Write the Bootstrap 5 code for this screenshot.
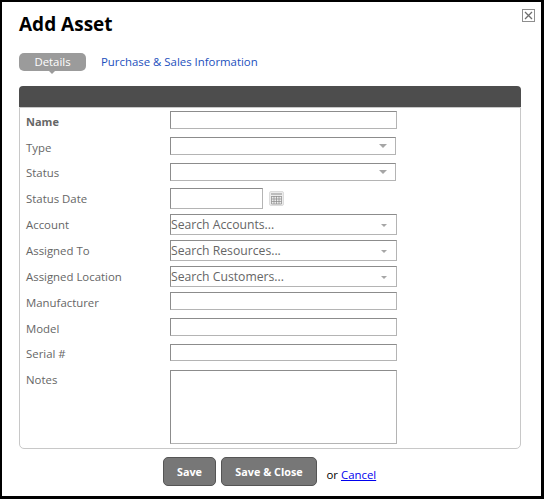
<!DOCTYPE html>
<html lang="en">
<head>
<meta charset="utf-8">
<title>Add Asset</title>
<link rel="stylesheet" href="https://cdn.jsdelivr.net/npm/bootstrap@5.3.0/dist/css/bootstrap.min.css">
<style>
html,body{height:100%;background:#fff}
body{font-family:"Open Sans","Noto Sans",sans-serif;font-size:11.4px;color:#666}
.dlg{width:544px;height:499px;border:solid #000;border-width:2px 3px 3px 2px;display:flex;flex-direction:column;padding:0 20px 0 17px;position:relative}
.dlg-title{font-size:19px;font-weight:700;color:#000;margin:0;line-height:26px;padding-top:9px;height:37px}
.dlg-close{position:absolute;top:7px;right:6px;width:13px;height:13px;display:block;line-height:0}
.tabs-row{margin-top:14px;height:33px;align-items:flex-start}
.tab-on{width:67px;height:18px;background:#9b9b9b;color:#fff;border-radius:5px;line-height:17px;text-align:center;position:relative;display:block;text-decoration:none}
.tab-on::after{content:"";position:absolute;left:30px;top:18px;border:solid transparent;border-width:3px 3px 0;border-top-color:#9b9b9b}
.tab-off{color:#1c4fbd;text-decoration:none;margin-left:15px;line-height:17px}
.pane{height:363px;border-radius:4px 4px 5px 5px;border:0;background:transparent;width:502px}
.pane-head{height:21px;background:#4d4d4d;border-radius:4px 4px 0 0;flex:none}
.pane-body{flex:1;border:1px solid #c8c8c8;border-radius:0 0 5px 5px;padding:3px 0 0 6px}
.f-row{height:26px;display:flex;align-items:flex-start}
.f-row.short{height:25px}
.f-label{width:144px;flex:none;line-height:20px;padding-top:1px;margin:0;color:#666}
.f-label.req{font-weight:700;font-size:11px}
.f-label.up{padding-top:0}
.f-in{display:block;padding:0 1px 1px 0;border:1px solid;border-color:#8c8c8c #b4b4b4 #b4b4b4 #8c8c8c;border-radius:0;font-size:12.2px;line-height:18px;color:#666;background:#fff;box-shadow:none}
.f-in::placeholder{color:#666;opacity:1}
.w-full{width:227px;height:18px}
.w-sel{width:226px;height:18px}
.w-date{width:93px;height:21px}
.w-combo{width:227px;height:21px}
.h-serial{height:17px}
.h-notes{height:74px;resize:none}
.sel-wrap{position:relative;display:block}
.sel-wrap::after{content:"";position:absolute;right:9px;top:7px;border:solid transparent;border-width:4px 4px 0;border-top-color:#a6a6a6}
.combo-wrap::after{top:10px;right:10px;border-width:3px 3px 0}
.cal{margin:3px 0 0 6px;display:block}
.foot{height:38px;padding-top:8px;align-items:flex-start;justify-content:flex-start;padding-left:144px}
.btn-g{height:29px;background:#777;border:1px solid #555;border-radius:5px;color:#fff;font-weight:700;font-size:10.8px;padding:0;line-height:26px}
.btn-g:hover{background:#777;color:#fff;border-color:#555}
.b-save{width:53px}
.b-saveclose{width:96px;margin-left:5px}
.foot-or{color:#000;margin-left:9.5px;line-height:18px;padding-top:9px}
.foot-or a{color:#00e}
</style>
</head>
<body>
<div class="dlg">
  <h1 class="dlg-title">Add Asset</h1>
  <a class="dlg-close" href="#" aria-label="Close">
    <svg width="13" height="13" viewBox="0 0 13 13"><rect x=".5" y=".5" width="12" height="12" fill="#fff" stroke="#8e8e8e"/><path d="M3 3l7 7M10 3l-7 7" stroke="#6e6e6e" stroke-width="1.3"/></svg>
  </a>
  <div class="d-flex tabs-row">
    <a class="tab-on" href="#">Details</a>
    <a class="tab-off" href="#">Purchase &amp; Sales Information</a>
  </div>
  <div class="card pane d-flex flex-column">
    <div class="pane-head"></div>
    <form class="pane-body">
      <div class="f-row"><label class="f-label req">Name</label><input class="form-control f-in w-full" type="text"></div>
      <div class="f-row"><label class="f-label">Type</label><span class="sel-wrap"><input class="form-control f-in w-sel" type="text"></span></div>
      <div class="f-row short"><label class="f-label up">Status</label><span class="sel-wrap"><input class="form-control f-in w-sel" type="text"></span></div>
      <div class="f-row"><label class="f-label">Status Date</label><input class="form-control f-in w-date" type="text">
        <svg class="cal" width="15" height="15" viewBox="0 0 15 15"><rect x=".5" y=".5" width="14" height="14" rx="1.5" fill="#ececec" stroke="#dcdcdc"/><rect x="2" y="2" width="11" height="2" fill="#bdbdbd"/><path d="M2.500 5.500h10M2.500 8h10M2.500 10.500h10M2.500 13h10M2.500 5v8M5 5v8M7.500 5v8M10 5v8M12.500 5v8" stroke="#8a8a8a" stroke-width=".7" fill="none"/></svg>
      </div>
      <div class="f-row"><label class="f-label">Account</label><span class="sel-wrap combo-wrap"><input class="form-control f-in w-combo" type="text" placeholder="Search Accounts..."></span></div>
      <div class="f-row"><label class="f-label">Assigned To</label><span class="sel-wrap combo-wrap"><input class="form-control f-in w-combo" type="text" placeholder="Search Resources..."></span></div>
      <div class="f-row"><label class="f-label">Assigned Location</label><span class="sel-wrap combo-wrap"><input class="form-control f-in w-combo" type="text" placeholder="Search Customers..."></span></div>
      <div class="f-row"><label class="f-label">Manufacturer</label><input class="form-control f-in w-full" type="text"></div>
      <div class="f-row"><label class="f-label">Model</label><input class="form-control f-in w-full" type="text"></div>
      <div class="f-row"><label class="f-label up">Serial #</label><input class="form-control f-in w-full h-serial" type="text"></div>
      <div class="f-row"><label class="f-label up">Notes</label><textarea class="form-control f-in w-full h-notes"></textarea></div>
    </form>
  </div>
  <div class="d-flex foot">
    <button type="button" class="btn btn-g b-save">Save</button>
    <button type="button" class="btn btn-g b-saveclose">Save &amp; Close</button>
    <span class="foot-or">or <a href="#">Cancel</a></span>
  </div>
</div>
<script src="https://cdn.jsdelivr.net/npm/bootstrap@5.3.0/dist/js/bootstrap.bundle.min.js"></script>
</body>
</html>
